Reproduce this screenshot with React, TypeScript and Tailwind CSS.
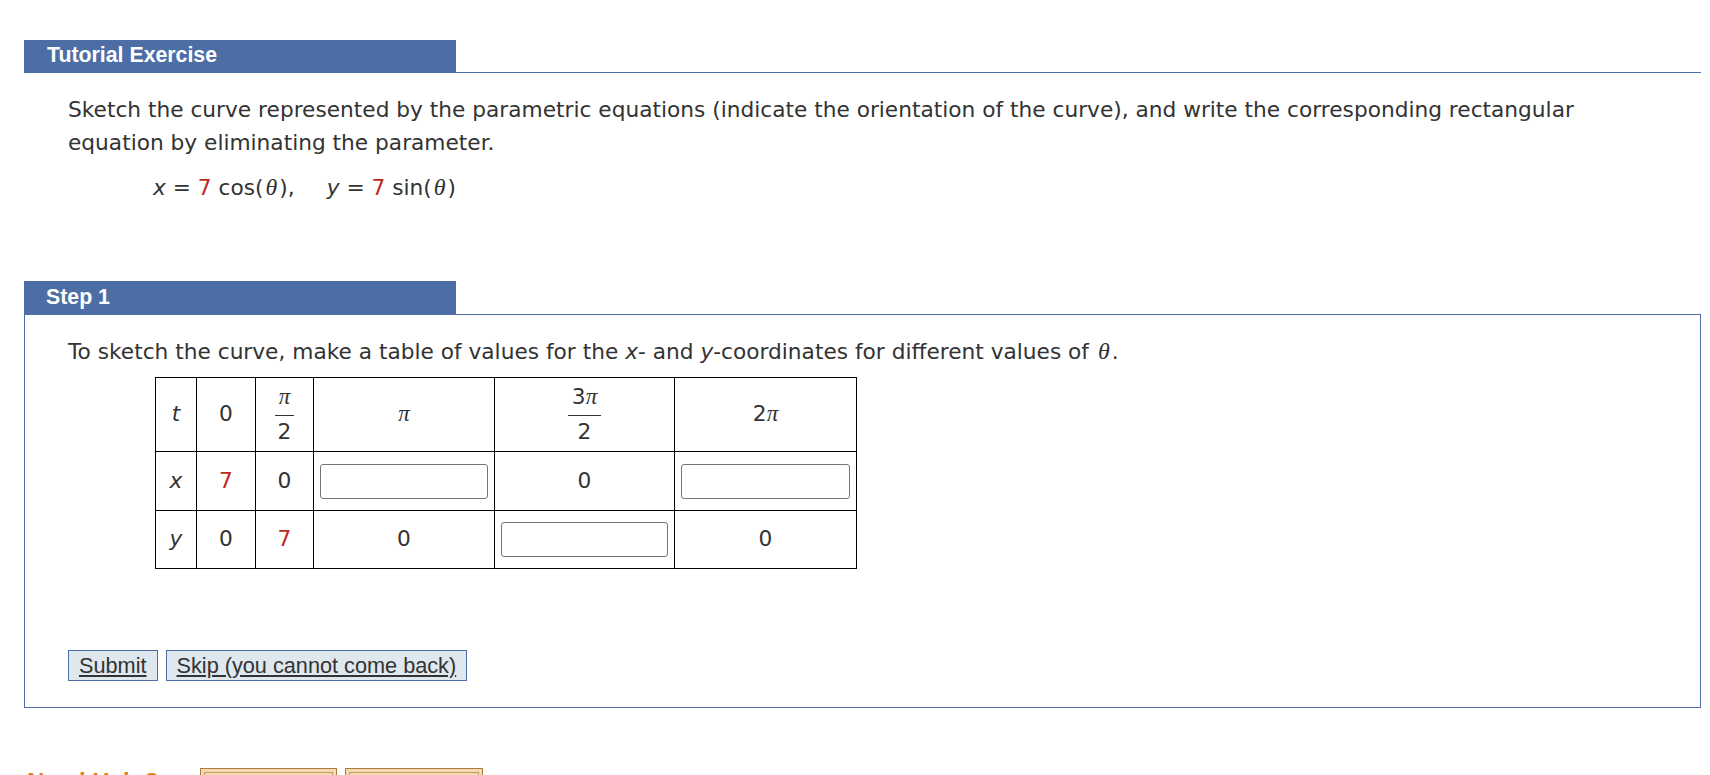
const blue = "bg-[#4c6ea5]";

const Pi = () => <span className="font-['Liberation_Serif',serif] italic text-[23px]">π</span>;

const Theta = () => <span className="font-['Liberation_Serif',serif] italic text-[24px] mx-[2px]">θ</span>;

const Red = ({ children }: { children: React.ReactNode }) => <span className="text-[#c1281d]">{children}</span>;

const Frac = ({ top }: { top: React.ReactNode }) => (
  <span className="inline-flex flex-col items-center align-middle leading-[24px]">
    <span className="px-[4px] pb-[6px] border-b border-[#333]">{top}</span>
    <span className="pt-[4px]">2</span>
  </span>
);

const Blank = () => (
  <input
    type="text"
    className="w-full h-[35px] border border-[#767676] rounded-[3px] bg-white"
  />
);

const cell = "border border-black text-center p-0";

export default function App() {
  return (
    <div className="font-['DejaVu_Sans',Verdana,sans-serif] text-[21.7px] text-[#333] pt-[40px] pl-[24px] pr-[9px] bg-white min-h-screen">
      {/* Tutorial Exercise */}
      <div className="border-b border-[#4c6ea5]">
        <div className={`${blue} w-[432px] h-[32px] pl-[23px] flex items-center font-['Liberation_Sans',Arial,sans-serif] font-bold text-white text-[21.3px]`}>
          Tutorial Exercise
        </div>
      </div>
      <div className="pl-[44px] pt-[20px] leading-[33px]">
        <p className="pr-[80px]">
          Sketch the curve represented by the parametric equations (indicate the orientation of the curve), and write the corresponding rectangular equation by eliminating the parameter.
        </p>
        <p className="mt-[12px] pl-[85px]">
          <span className="italic">x</span> = <Red>7</Red> cos(<Theta />),<span className="inline-block w-[32px]" /><span className="italic">y</span> = <Red>7</Red> sin(<Theta />)
        </p>
      </div>

      {/* Step 1 */}
      <div className="mt-[77px]">
        <div className={`${blue} w-[432px] h-[33px] pl-[22px] flex items-center font-['Liberation_Sans',Arial,sans-serif] font-bold text-white text-[21.3px]`}>
          Step 1
        </div>
        <div className="border border-[#4c6ea5] pl-[43px] pt-[20px] pb-[26px]">
          <p className="leading-[33px]">
            To sketch the curve, make a table of values for the <span className="italic">x</span>- and <span className="italic">y</span>-coordinates for different values of <Theta />.
          </p>
          <table className="mt-[9px] ml-[87px] border-collapse table-fixed w-[701px]">
            <colgroup>
              <col className="w-[41px]" />
              <col className="w-[59px]" />
              <col className="w-[58px]" />
              <col className="w-[181px]" />
              <col className="w-[180px]" />
              <col className="w-[182px]" />
            </colgroup>
            <tbody>
              <tr className="h-[74px]">
                <td className={`${cell} italic`}>t</td>
                <td className={cell}>0</td>
                <td className={cell}><Frac top={<Pi />} /></td>
                <td className={cell}><Pi /></td>
                <td className={cell}><Frac top={<>3<Pi /></>} /></td>
                <td className={cell}>2<Pi /></td>
              </tr>
              <tr className="h-[59px]">
                <td className={`${cell} italic`}>x</td>
                <td className={cell}><Red>7</Red></td>
                <td className={cell}>0</td>
                <td className={`${cell} px-[6px]`}><Blank /></td>
                <td className={cell}>0</td>
                <td className={`${cell} px-[6px]`}><Blank /></td>
              </tr>
              <tr className="h-[58px]">
                <td className={`${cell} italic`}>y</td>
                <td className={cell}>0</td>
                <td className={cell}><Red>7</Red></td>
                <td className={cell}>0</td>
                <td className={`${cell} px-[6px]`}><Blank /></td>
                <td className={cell}>0</td>
              </tr>
            </tbody>
          </table>
          <div className="mt-[81px] flex gap-[8px] font-['Liberation_Sans',Arial,sans-serif] text-[21.7px]">
            <button className="h-[31px] px-[10px] border border-[#4c6ea5] bg-[#dfe7ef] text-[#333] underline leading-none">
              Submit
            </button>
            <button className="h-[31px] px-[10px] border border-[#4c6ea5] bg-[#dfe7ef] text-[#333] underline leading-none">
              Skip (you cannot come back)
            </button>
          </div>
        </div>
      </div>

      {/* Need help */}
      <div className="mt-[60px] flex items-start gap-[8px] pb-[40px]">
        <span className="pl-[3px] pt-[2px] w-[168px] font-['Liberation_Sans',Arial,sans-serif] font-bold text-[24px] leading-none text-[#e57c1e]">
          Need Help?
        </span>
        <button className="w-[137px] h-[34px] border border-[#a97c43] bg-[#f7d9ad] p-[3px]">
          <span className="block h-full border border-[#bf9a6a] font-['Liberation_Sans',Arial,sans-serif] text-[16px] text-[#333] leading-[24px]">Read It</span>
        </button>
        <button className="w-[138px] h-[34px] border border-[#a97c43] bg-[#f7d9ad] p-[3px]">
          <span className="block h-full border border-[#bf9a6a] font-['Liberation_Sans',Arial,sans-serif] text-[16px] text-[#333] leading-[24px]">Watch It</span>
        </button>
      </div>
    </div>
  );
}
